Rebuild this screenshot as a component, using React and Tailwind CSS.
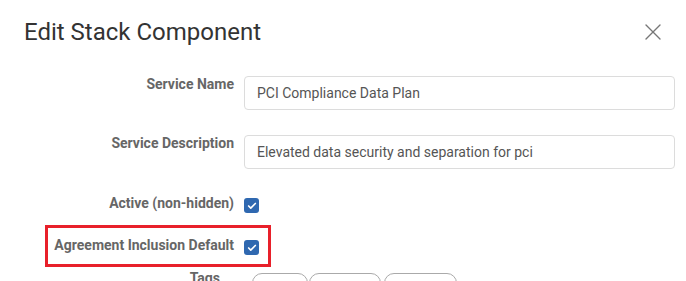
import React from 'react';
import { X, Check } from 'lucide-react';

const Field = ({ label, children, className = '' }) => (
  <div className={`flex items-start ${className}`}>
    <label className="w-[220px] shrink-0 whitespace-nowrap pr-[10px] text-right text-[14px] font-bold leading-[16px] text-[#666]">
      {label}
    </label>
    <div className="flex-1">{children}</div>
  </div>
);

const CheckBox = () => (
  <span className="flex h-[15px] w-[15px] items-center justify-center rounded-[3px] bg-[#2f68b0]">
    <Check className="h-[10px] w-[10px] text-white" strokeWidth={4} />
  </span>
);

export default function App() {
  const font = { fontFamily: 'Roboto, "Liberation Sans", sans-serif' };

  return (
    <div className="h-[281px] w-[686px] overflow-hidden bg-white" style={font}>
      <div className="flex items-center justify-between pl-[24px] pr-[19px] pt-[16px]">
        <h1 className="text-[24px] leading-[32px] text-[#333]">Edit Stack Component</h1>
        <X className="h-[28px] w-[28px] text-[#777]" strokeWidth={1.2} />
      </div>

      <div className="pl-[24px] pr-[11px] pt-[28px]">
        <Field label="Service Name">
          <div className="flex h-[34px] items-center rounded-[4px] border border-[#dcdcdc] px-[12px] text-[14px] text-[#555]">
            PCI Compliance Data Plan
          </div>
        </Field>

        <Field label="Service Description" className="mt-[25px]">
          <div className="flex h-[34px] items-center rounded-[4px] border border-[#dcdcdc] px-[12px] text-[14px] text-[#555]">
            Elevated data security and separation for pci
          </div>
        </Field>

        <Field label="Active (non-hidden)" className="mt-[26px]">
          <div className="pt-[3px]">
            <CheckBox />
          </div>
        </Field>

        <div className="ml-[21px] mt-[12px] w-[226px] border-[3px] border-[#e8202a] py-[9px]">
          <div className="flex items-start">
            <label className="w-[196px] shrink-0 whitespace-nowrap pr-[10px] text-right text-[14px] font-bold leading-[16px] text-[#666]">
              Agreement Inclusion Default
            </label>
            <div className="pt-[3px]">
              <CheckBox />
            </div>
          </div>
        </div>

        <div className="mt-[3px] flex items-start">
          <label className="w-[206px] shrink-0 pr-[10px] text-right text-[14px] font-bold leading-[16px] text-[#666]">
            Tags
          </label>
          <div className="mt-[3px] flex gap-[1px] pl-[22px]">
            <span className="h-[20px] w-[56px] rounded-full border border-[#aaa]" />
            <span className="h-[20px] w-[72px] rounded-full border border-[#aaa]" />
            <span className="ml-[2px] h-[20px] w-[73px] rounded-full border border-[#aaa]" />
          </div>
        </div>
      </div>
    </div>
  );
}
